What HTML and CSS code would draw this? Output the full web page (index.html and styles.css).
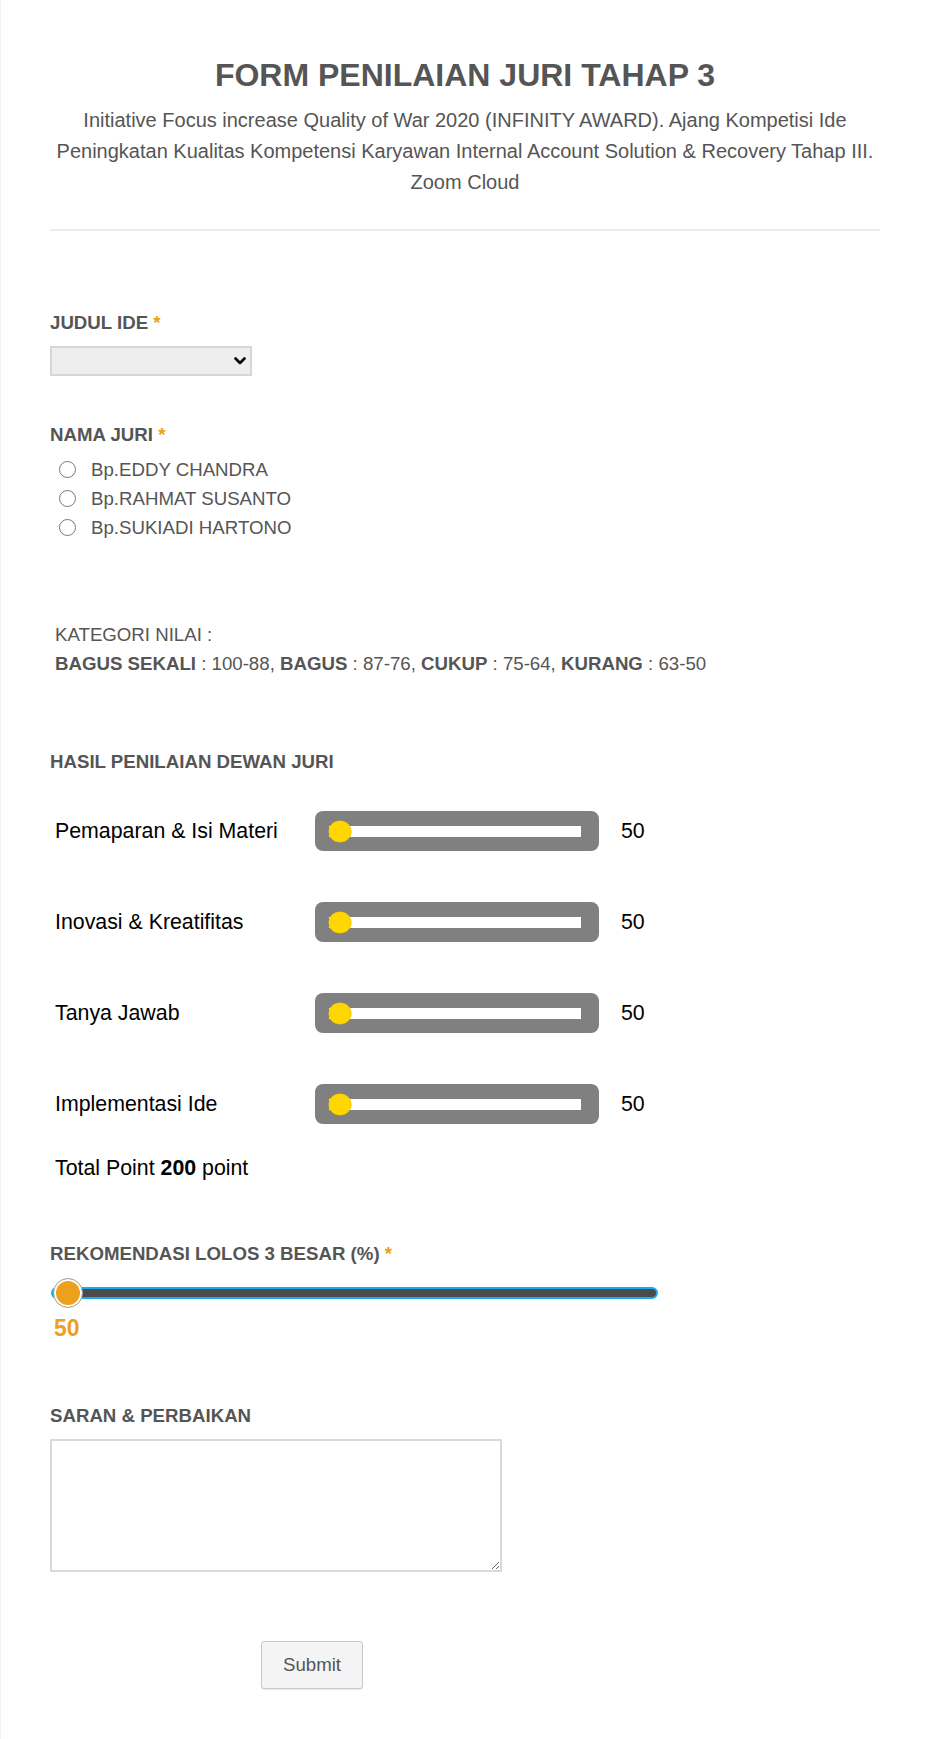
FILE: index.html
```html
<!DOCTYPE html>
<html lang="id">
<head>
<meta charset="utf-8">
<title>FORM PENILAIAN JURI TAHAP 3</title>
<link rel="stylesheet" href="styles.css">
</head>
<body>
<form class="form" onsubmit="return false;">
  <header class="form-header">
    <h1 class="form-title">FORM PENILAIAN JURI TAHAP 3</h1>
    <p class="form-subtitle">Initiative Focus increase Quality of War 2020 (INFINITY AWARD). Ajang Kompetisi Ide Peningkatan Kualitas Kompetensi Karyawan Internal Account Solution &amp; Recovery Tahap III. Zoom Cloud</p>
  </header>

  <div class="field field-judul">
    <label class="field-label" for="judul">JUDUL IDE <span class="req">*</span></label>
    <select id="judul" class="field-select">
      <option value=""></option>
    </select>
  </div>

  <div class="field field-nama">
    <div class="field-label">NAMA JURI <span class="req">*</span></div>
    <div class="radio-list">
      <label class="radio-row"><input type="radio" name="juri" class="radio"><span>Bp.EDDY CHANDRA</span></label>
      <label class="radio-row"><input type="radio" name="juri" class="radio"><span>Bp.RAHMAT SUSANTO</span></label>
      <label class="radio-row"><input type="radio" name="juri" class="radio"><span>Bp.SUKIADI HARTONO</span></label>
    </div>
  </div>

  <div class="kategori">
    <div>KATEGORI NILAI :</div>
    <div><b>BAGUS SEKALI</b> : 100-88, <b>BAGUS</b> : 87-76, <b>CUKUP</b> : 75-64, <b>KURANG</b> : 63-50</div>
  </div>

  <div class="field-label section-hasil">HASIL PENILAIAN DEWAN JURI</div>

  <div class="score-grid">
    <div class="score-label">Pemaparan &amp; Isi Materi</div>
    <input type="range" class="score-range" min="50" max="100" value="50">
    <div class="score-value">50</div>

    <div class="score-label">Inovasi &amp; Kreatifitas</div>
    <input type="range" class="score-range" min="50" max="100" value="50">
    <div class="score-value">50</div>

    <div class="score-label">Tanya Jawab</div>
    <input type="range" class="score-range" min="50" max="100" value="50">
    <div class="score-value">50</div>

    <div class="score-label">Implementasi Ide</div>
    <input type="range" class="score-range" min="50" max="100" value="50">
    <div class="score-value">50</div>
  </div>

  <div class="total">Total Point <b>200</b> point</div>

  <div class="field field-rekom">
    <div class="field-label">REKOMENDASI LOLOS 3 BESAR (%) <span class="req">*</span></div>
    <input type="range" class="rekom-range" min="50" max="100" value="50">
    <div class="rekom-value">50</div>
  </div>

  <div class="field field-saran">
    <label class="field-label" for="saran">SARAN &amp; PERBAIKAN</label>
    <textarea id="saran" class="field-textarea"></textarea>
  </div>

  <div class="buttons">
    <button type="submit" class="submit-btn">Submit</button>
  </div>
</form>
</body>
</html>
```

FILE: styles.css
```css
html, body {
  margin: 0;
  padding: 0;
  background: #ffffff;
}

body {
  font-family: "Liberation Sans", Arial, Helvetica, sans-serif;
  color: #555555;
  border-left: 1px solid #f0f0f0;
  min-height: 1739px;
  box-sizing: border-box;
}

.form {
  padding: 0 50px 50px 49px;
}

.form-header {
  padding-top: 56px;
  padding-bottom: 31px;
  border-bottom: 2px solid #ebebeb;
  text-align: center;
}

.form-title {
  margin: 0 0 11px;
  font-size: 32px;
  line-height: 38px;
  font-weight: bold;
  color: #555555;
}

.form-subtitle {
  margin: 0;
  font-size: 20px;
  line-height: 31px;
  color: #555555;
}

.field-label {
  display: block;
  font-size: 18.67px;
  line-height: 24px;
  font-weight: bold;
  color: #555555;
}

.req {
  color: #f0a10f;
}

.field-judul {
  margin-top: 80px;
}

.field-select {
  -webkit-appearance: none;
  appearance: none;
  display: block;
  margin-top: 11px;
  width: 202px;
  height: 30px;
  box-sizing: border-box;
  background: #eeeeee url("data:image/svg+xml,%3Csvg xmlns='http://www.w3.org/2000/svg' width='12' height='8' viewBox='0 0 12 8'%3E%3Cpath d='M1.5 1.5 L6 6 L10.5 1.5' fill='none' stroke='%23000' stroke-width='2.6' stroke-linecap='round' stroke-linejoin='round'/%3E%3C/svg%3E") no-repeat right 4px center / 12px 8px;
  border: 2px solid #d6d6d6;
  border-radius: 0;
  font-family: inherit;
  font-size: 16px;
  color: #000;
}

.field-nama {
  margin-top: 47px;
}

.radio-list {
  margin-top: 8px;
}

.radio-row {
  display: flex;
  align-items: center;
  height: 29px;
  font-size: 18.67px;
  color: #555555;
}

.radio {
  width: 17px;
  height: 17px;
  margin: 0 15px 0 9px;
}

.kategori {
  margin-top: 78px;
  padding-left: 5px;
  font-size: 18.67px;
  line-height: 29px;
  color: #555555;
}

.section-hasil {
  margin-top: 72px;
}

.score-grid {
  margin-top: 37px;
  padding-left: 5px;
  display: grid;
  grid-template-columns: 238px 284px auto;
  column-gap: 22px;
  row-gap: 51px;
  align-items: center;
}

.score-label,
.score-value {
  font-size: 21.33px;
  color: #000000;
}

.score-range {
  -webkit-appearance: none;
  appearance: none;
  display: block;
  margin: 0;
  width: 284px;
  height: 40px;
  padding: 0 18px 0 14px;
  box-sizing: border-box;
  background: #808080;
  border-radius: 8px;
}

.score-range::-webkit-slider-runnable-track {
  height: 11px;
  background: #ffffff;
  border: none;
}

.score-range::-webkit-slider-thumb {
  -webkit-appearance: none;
  appearance: none;
  width: 22px;
  height: 21px;
  margin-top: -5px;
  border-radius: 50%;
  background: #ffd700;
  border: none;
  box-shadow: 0 0 0 0.5px #e8b400;
}

.total {
  margin-top: 30px;
  padding-left: 5px;
  font-size: 21.33px;
  line-height: 28px;
  color: #000000;
}

.field-rekom {
  margin-top: 60px;
}

.rekom-range {
  -webkit-appearance: none;
  appearance: none;
  display: block;
  margin: 12px 0 0 1px;
  width: 607px;
  height: 30px;
  padding: 0;
  background: transparent;
}

.rekom-range::-webkit-slider-runnable-track {
  height: 12px;
  box-sizing: border-box;
  background: #4b4b4b;
  border: 2px solid #14aef0;
  border-radius: 6px;
}

.rekom-range::-webkit-slider-thumb {
  -webkit-appearance: none;
  appearance: none;
  width: 30px;
  height: 30px;
  margin-top: -11px;
  border-radius: 50%;
  box-sizing: border-box;
  background: #eda01b;
  border: 1px solid #a9a9a9;
  box-shadow: inset 0 0 0 2px #ffffff;
}

.rekom-value {
  margin-top: 6px;
  padding-left: 4px;
  font-size: 23px;
  line-height: 28px;
  font-weight: bold;
  color: #eda01b;
}

.field-saran {
  margin-top: 62px;
}

.field-textarea {
  display: block;
  margin-top: 11px;
  width: 452px;
  height: 133px;
  box-sizing: border-box;
  border: 2px solid #dadada;
  border-radius: 0;
  background: #ffffff;
  font-family: inherit;
  font-size: 16px;
  color: #555555;
}

.buttons {
  margin-top: 69px;
  padding-left: 211px;
}

.submit-btn {
  display: block;
  width: 102px;
  height: 48px;
  box-sizing: border-box;
  background: #f4f4f4;
  border: 1px solid #c9c9c9;
  border-radius: 3px;
  box-shadow: 0 1px 1px rgba(0, 0, 0, 0.08);
  font-family: inherit;
  font-size: 18.67px;
  color: #555555;
  padding: 0;
}
```
